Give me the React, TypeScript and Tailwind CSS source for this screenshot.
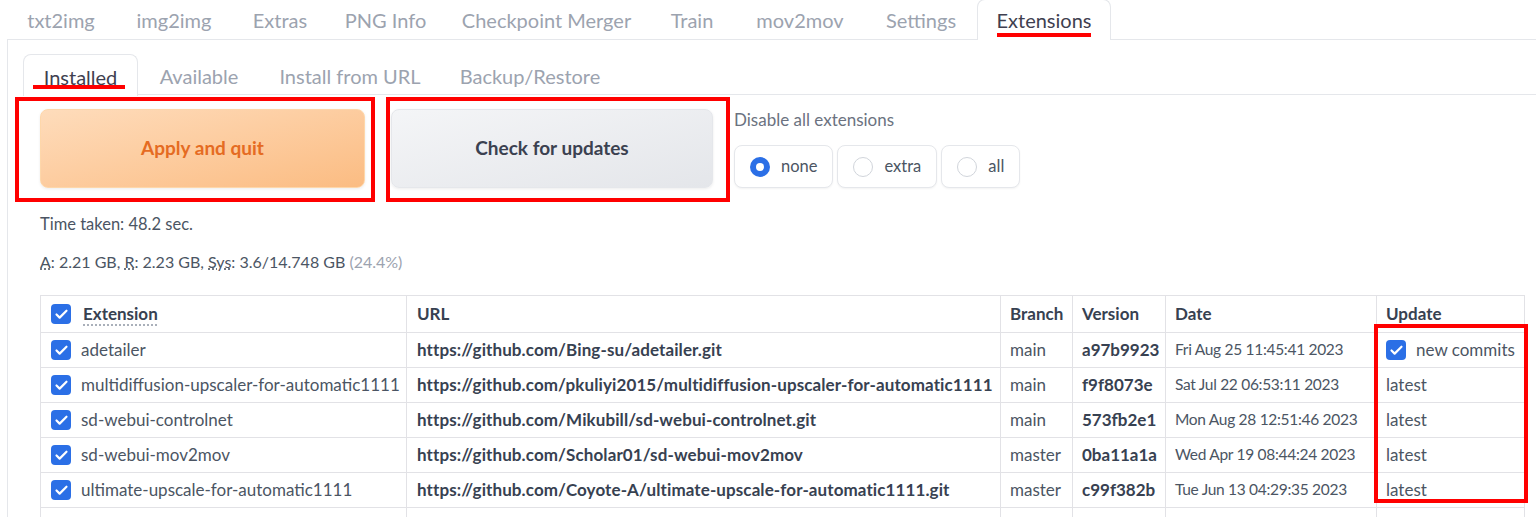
import { Check } from "lucide-react";

const tabs = [
  { label: "txt2img", w: "w-[108px]" },
  { label: "img2img", w: "w-[118px]" },
  { label: "Extras", w: "w-[94px]" },
  { label: "PNG Info", w: "w-[117px]" },
  { label: "Checkpoint Merger", w: "w-[205px]" },
  { label: "Train", w: "w-[86px]" },
  { label: "mov2mov", w: "w-[130px]" },
  { label: "Settings", w: "w-[112px]" },
  { label: "Extensions", w: "w-[134px]" },
];

const subTabs = [
  { label: "Installed", w: "w-[115px]" },
  { label: "Available", w: "w-[122px]" },
  { label: "Install from URL", w: "w-[180px]" },
  { label: "Backup/Restore", w: "w-[180px]" },
];

const rows = [
  {
    name: "adetailer",
    url: "https://github.com/Bing-su/adetailer.git",
    branch: "main",
    version: "a97b9923",
    date: "Fri Aug 25 11:45:41 2023",
    update: "new",
  },
  {
    name: "multidiffusion-upscaler-for-automatic1111",
    url: "https://github.com/pkuliyi2015/multidiffusion-upscaler-for-automatic1111",
    branch: "main",
    version: "f9f8073e",
    date: "Sat Jul 22 06:53:11 2023",
    update: "latest",
  },
  {
    name: "sd-webui-controlnet",
    url: "https://github.com/Mikubill/sd-webui-controlnet.git",
    branch: "main",
    version: "573fb2e1",
    date: "Mon Aug 28 12:51:46 2023",
    update: "latest",
  },
  {
    name: "sd-webui-mov2mov",
    url: "https://github.com/Scholar01/sd-webui-mov2mov",
    branch: "master",
    version: "0ba11a1a",
    date: "Wed Apr 19 08:44:24 2023",
    update: "latest",
  },
  {
    name: "ultimate-upscale-for-automatic1111",
    url: "https://github.com/Coyote-A/ultimate-upscale-for-automatic1111.git",
    branch: "master",
    version: "c99f382b",
    date: "Tue Jun 13 04:29:35 2023",
    update: "latest",
  },
];

function Box() {
  return (
    <span className="w-[20px] h-[20px] rounded-[4px] bg-[#2b6fe6] flex items-center justify-center shrink-0">
      <Check size={15} strokeWidth={3.5} color="white" />
    </span>
  );
}

function Radio({ label, on }: { label: string; on?: boolean }) {
  return (
    <div className="h-[43px] px-[15px] flex items-center gap-[11px] border border-[#e5e7eb] rounded-[8px] bg-white shadow-[0_1px_2px_rgba(0,0,0,0.05)]">
      {on ? (
        <span className="w-[20px] h-[20px] rounded-full bg-[#2b6fe6] flex items-center justify-center">
          <span className="w-[8px] h-[8px] rounded-full bg-white" />
        </span>
      ) : (
        <span className="w-[20px] h-[20px] rounded-full border border-[#d1d5db] bg-white" />
      )}
      <span className="text-[16.5px] text-[#4b5563]">{label}</span>
    </div>
  );
}

export default function App() {
  return (
    <div className="relative w-[1536px] h-[517px] overflow-hidden bg-white font-['Lato',sans-serif]">
      {/* main tabs */}
      <nav className="ml-[7px] flex border-b border-[#e5e7eb] h-[40px]">
        {tabs.map((t) =>
          t.label === "Extensions" ? (
            <div
              key={t.label}
              className={`${t.w} relative h-[41px] -mt-px flex items-center justify-center whitespace-nowrap text-[20px] text-[#3f3f50] bg-white border border-b-0 border-[#e5e7eb] rounded-t-[8px]`}
            >
              {t.label}
            </div>
          ) : (
            <div key={t.label} className={`${t.w} h-[40px] flex items-center justify-center whitespace-nowrap text-[20px] text-[#9ca3af]`}>
              {t.label}
            </div>
          )
        )}
      </nav>

      {/* panel */}
      <div className="ml-[7px] h-[480px] border-l border-[#e5e7eb] pl-[15px] pt-[14px]">
        <div className="flex border-b border-[#e5e7eb] h-[41px]">
          {subTabs.map((t, i) => (
            <div
              key={t.label}
              className={
                i === 0
                  ? `${t.w} h-[42px] pt-[2px] flex items-center justify-center whitespace-nowrap text-[20px] text-[#3f3f50] bg-white border border-b-0 border-[#e5e7eb] rounded-t-[8px]`
                  : `${t.w} h-[41px] pt-[2px] flex items-center justify-center whitespace-nowrap text-[20px] text-[#9ca3af]`
              }
            >
              {t.label}
            </div>
          ))}
        </div>

        <div className="pl-[17px] pt-[14px]">
          <div className="flex items-start">
            <button className="w-[325px] h-[79px] rounded-[8px] border border-[#fed7aa] bg-gradient-to-br from-[#fedcbb] to-[#fbbc82] text-[19px] font-bold text-[#e56b22] shadow-[0_1px_3px_rgba(0,0,0,0.08)]">
              Apply and quit
            </button>
            <button className="ml-[26px] w-[322px] h-[79px] rounded-[8px] border border-[#e5e7eb] bg-gradient-to-br from-[#f4f5f7] to-[#e4e6ea] text-[19px] font-bold text-[#3b4150] shadow-[0_1px_3px_rgba(0,0,0,0.08)]">
              Check for updates
            </button>
            <div className="ml-[21px] -mt-px">
              <div className="h-[24px] leading-[24px] text-[17px] text-[#6b7280]">Disable all extensions</div>
              <div className="mt-[13px] flex gap-[4px]">
                <Radio label="none" on />
                <Radio label="extra" />
                <Radio label="all" />
              </div>
            </div>
          </div>

          <div className="mt-[24px] h-[24px] leading-[24px] text-[16.5px] text-[#4b5563]">Time taken: 48.2 sec.</div>
          <div className="mt-[14px] h-[24px] leading-[24px] text-[16px] text-[#4b5563]">
            <span className="underline decoration-dotted">A</span>: 2.21 GB, <span className="underline decoration-dotted">R</span>: 2.23 GB,{" "}
            <span className="underline decoration-dotted">Sys</span>: 3.6/14.748 GB <span className="text-[#9ca3af]">(24.4%)</span>
          </div>

          <table className="mt-[21px] w-[1484px] table-fixed border-collapse text-[17px]">
            <colgroup>
              <col className="w-[366px]" />
              <col className="w-[594px]" />
              <col className="w-[72px]" />
              <col className="w-[93px]" />
              <col className="w-[211px]" />
              <col className="w-[148px]" />
            </colgroup>
            <thead>
              <tr className="h-[37px] text-left font-bold text-[#374151]">
                <th className="border border-[#e2e2e6] px-[10px] font-bold">
                  <div className="flex items-center gap-[12px]">
                    <Box />
                    <span className="underline decoration-dotted decoration-[#9ca3af] underline-offset-4">Extension</span>
                  </div>
                </th>
                <th className="border border-[#e2e2e6] px-[10px] font-bold">URL</th>
                <th className="border border-[#e2e2e6] px-[9px] font-bold">Branch</th>
                <th className="border border-[#e2e2e6] px-[9px] font-bold">Version</th>
                <th className="border border-[#e2e2e6] px-[9px] font-bold">Date</th>
                <th className="border border-[#e2e2e6] px-[9px] font-bold">
                  <span className="underline decoration-dotted decoration-[#9ca3af] underline-offset-4">Update</span>
                </th>
              </tr>
            </thead>
            <tbody>
              {rows.map((r) => (
                <tr key={r.name} className="h-[35px] text-[#4b5563]">
                  <td className="border border-[#e2e2e6] px-[10px]">
                    <div className="flex items-center gap-[10px] whitespace-nowrap">
                      <Box />
                      {r.name}
                    </div>
                  </td>
                  <td className="border border-[#e2e2e6] px-[10px] font-bold text-[#374151] whitespace-nowrap tracking-[0.1px]">{r.url}</td>
                  <td className="border border-[#e2e2e6] px-[9px]">{r.branch}</td>
                  <td className="border border-[#e2e2e6] px-[9px] font-bold text-[#374151]">{r.version}</td>
                  <td className="border border-[#e2e2e6] px-[9px] whitespace-nowrap text-[15.5px] tracking-[-0.3px]">{r.date}</td>
                  <td className="border border-[#e2e2e6] px-[9px]">
                    {r.update === "new" ? (
                      <div className="flex items-center gap-[10px] whitespace-nowrap">
                        <Box />
                        new commits
                      </div>
                    ) : (
                      r.update
                    )}
                  </td>
                </tr>
              ))}
              <tr className="h-[35px]">
                <td className="border border-[#e2e2e6]" />
                <td className="border border-[#e2e2e6]" />
                <td className="border border-[#e2e2e6]" />
                <td className="border border-[#e2e2e6]" />
                <td className="border border-[#e2e2e6]" />
                <td className="border border-[#e2e2e6]" />
              </tr>
            </tbody>
          </table>
        </div>
      </div>

      {/* red annotations */}
      <div className="absolute left-[997px] top-[33px] w-[94px] h-[4px] bg-[#ff0000]" />
      <div className="absolute left-[33px] top-[85px] w-[92px] h-[4px] bg-[#ff0000]" />
      <div className="absolute left-[15px] top-[97px] w-[360px] h-[105px] border-4 border-[#ff0000]" />
      <div className="absolute left-[386px] top-[97px] w-[344px] h-[105px] border-4 border-[#ff0000]" />
      <div className="absolute left-[1374px] top-[324px] w-[154px] h-[179px] border-4 border-[#ff0000]" />
    </div>
  );
}
